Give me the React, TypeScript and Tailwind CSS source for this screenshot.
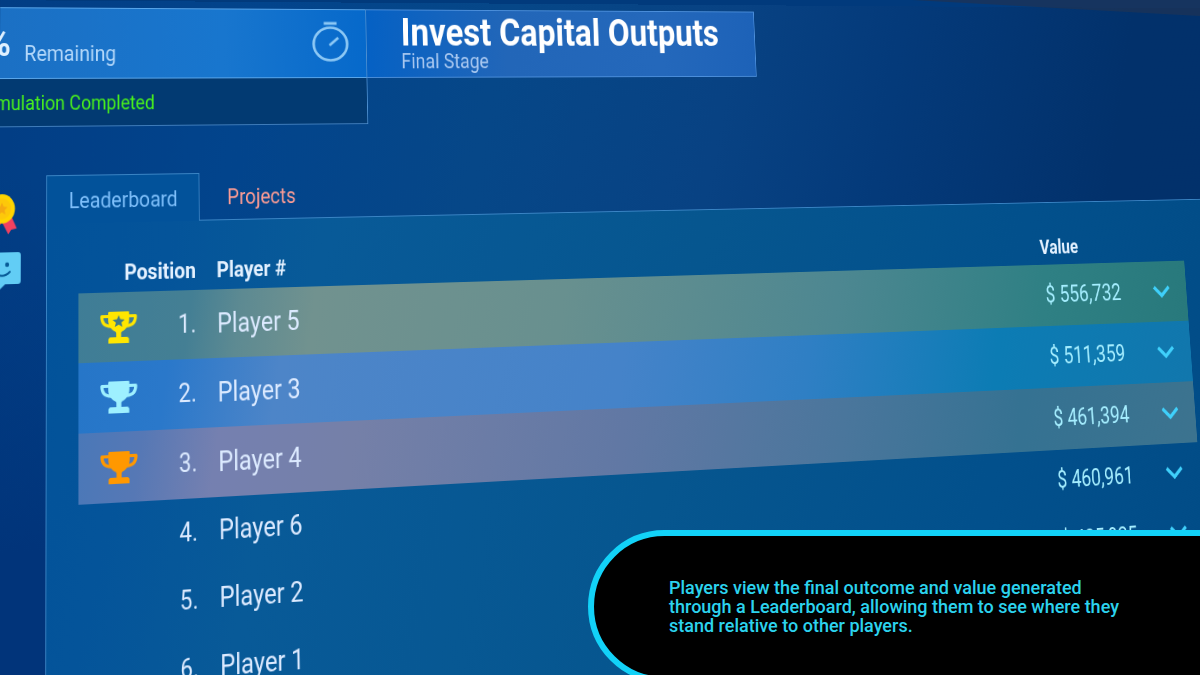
import React from "react";

type Row = {
  place: number;
  player: string;
  value: string;
  cup?: string;
  band?: string;
  star?: boolean;
};

const rows: Row[] = [
  {
    place: 1,
    player: "Player 5",
    value: "$ 556,732",
    cup: "#ffe600",
    star: true,
    band: "h-[68px] bg-[linear-gradient(100deg,#3f7d96_0%,#447f94_9%,#5d8a92_13%,#71928f_19%,#68908f_40%,#4d8791_65%,#2f8084_85%,#28797c_100%)]",
  },
  {
    place: 2,
    player: "Player 3",
    value: "$ 511,359",
    cup: "#9ef0ff",
    band: "h-[68px] bg-[linear-gradient(100deg,#2676c8_0%,#2a78ca_7%,#4d85c8_16%,#4583c9_45%,#2f7fc4_62%,#0c7cb4_80%,#1177ad_100%)]",
  },
  {
    place: 3,
    player: "Player 4",
    value: "$ 461,394",
    cup: "#ff9800",
    band: "h-[68px] bg-[linear-gradient(100deg,#4a78b8_0%,#5678b5_5%,#7580b0_11%,#7580a8_22%,#6178a4_45%,#4a769c_65%,#357292_82%,#3c738f_100%)]",
  },
  { place: 4, player: "Player 6", value: "$ 460,961" },
  { place: 5, player: "Player 2", value: "$ 425,925" },
  { place: 6, player: "Player 1", value: "" },
];

function Trophy({ color, star }: { color: string; star?: boolean }) {
  return (
    <svg viewBox="0 0 38 31" className="h-[31px] w-[42px]" aria-hidden="true" preserveAspectRatio="none">
      <path
        fill={color}
        d="M10 0h18.500c.8 0 1.200.5 1.200 1.200V8c0 6-3.200 9.500-7.200 11.500-.8.500-1 1-1 2V25h5.500c1.500 0 2.500 1 2.500 2.500V31H8.500v-3.500C8.500 26 9.500 25 11 25h5.500v-3.500c0-1-.2-1.500-1-2C11.500 17.500 8.300 14 8.300 8V1.200C8.300.5 8.900 0 10 0Z"
      />
      <path
        fill="none"
        stroke={color}
        strokeWidth="3"
        strokeLinejoin="round"
        d="M9 4.500H1.800c0 6 3 9.500 9.200 9.700M29 4.500h7.200c0 6-3 9.500-9.200 9.700"
      />
      {star && (
        <path fill="#3f7a86" d="m19 3.500 1.700 4.100 4.500.3-3.400 2.900 1.100 4.300-3.900-2.300-3.900 2.300 1.100-4.300-3.400-2.900 4.500-.3Z" />
      )}
    </svg>
  );
}

function Stopwatch() {
  return (
    <svg
      viewBox="0 0 42 42"
      className="h-[42px] w-[50px]"
      fill="none"
      stroke="#8cc8f5"
      strokeWidth="2.600"
      preserveAspectRatio="none"
      aria-hidden="true"
    >
      <path d="M14.500 2h13" strokeWidth="3" />
      <circle cx="21" cy="23.500" r="17" />
      <path d="m20 25 9-8" />
    </svg>
  );
}

function Chevron() {
  return (
    <svg viewBox="0 0 26 15" className="h-[15px] w-[28px]" fill="none" stroke="currentColor" strokeWidth="4" aria-hidden="true">
      <path d="m2 2 11 9.500L24 2" />
    </svg>
  );
}

function Medal() {
  return (
    <svg viewBox="0 0 34 40" className="h-[41px] w-[40px]" aria-hidden="true">
      <path fill="#f2415f" d="m8 24-7 11 6 .5 3 4.500 7-13Zm18-4 7 14-6 1-3 4.500-7-12Z" />
      <circle cx="17" cy="15" r="14" fill="#ffd500" />
      <circle cx="17" cy="15" r="10" fill="#fdc80a" />
      <path fill="#f5a912" d="m17 9 1.800 3.900 4.200.5-3.100 2.900.8 4.200-3.700-2.100-3.700 2.100.8-4.200-3.100-2.900 4.200-.5Z" />
    </svg>
  );
}

function Chat() {
  return (
    <svg viewBox="0 0 42 38" className="h-[38px] w-[44px]" aria-hidden="true">
      <path fill="#62cdf5" d="M5 1h33c2 0 3 1 3 3v25c0 2-1 3-3 3H24l-6 5v-5H5c-2 0-3-1-3-3V4c0-2 1-3 3-3Z" />
      <circle cx="14" cy="12" r="2.200" fill="#075b97" />
      <circle cx="26" cy="13" r="2.200" fill="#075b97" />
      <path d="M12 20c5 5 12 5 17 0" fill="none" stroke="#075b97" strokeWidth="2" strokeLinecap="round" />
    </svg>
  );
}

function Banner() {
  return (
    <header className="flex items-start">
      <section className="w-[427px] border-r border-[#4d8fd0]">
        <div className="flex h-[72px] items-center border-y border-[#5aa6ea] bg-[linear-gradient(90deg,#1b70c4,#1876ce_60%,#0669cb)] pr-[18px]">
          <span className="-ml-[16px] text-[38px] font-bold text-[#dff0ff]">%</span>
          <span className="ml-[15px] pt-5 text-[22px] text-[#b4d8fa]">Remaining</span>
          <span className="ml-auto pb-1">
            <Stopwatch />
          </span>
        </div>
        <div className="flex h-[48px] items-center border-b border-[#3f7cba] bg-[#023a72]">
          <p className="-ml-[22px] text-[20px] whitespace-nowrap text-[#48f01c]">Simulation Completed</p>
        </div>
      </section>
      <section className="flex h-[72px] w-[499px] flex-col justify-center border border-l-0 border-[#4c8fdb] bg-[linear-gradient(90deg,#0561c4,#2266b8_35%,#2468bb_75%,#1d62b8)] pb-[3px] pl-[42px]">
        <h1 className="text-[41px] leading-[40px] font-bold whitespace-nowrap text-white">Invest Capital Outputs</h1>
        <p className="text-[22px] leading-[22px] text-[#a9c8f0]">Final Stage</p>
      </section>
    </header>
  );
}

function Leaderboard() {
  return (
    <div className="grow">
      <nav className="flex h-[48px] items-stretch">
        <button className="w-[174px] border border-b-0 border-[#3a84c4] bg-[#02529a] pt-[2px] text-[22px] text-[#7fc0fb]">
          Leaderboard
        </button>
        <button className="grow border-b border-[#3a84c4] pt-[2px] pl-[32px] text-left text-[22px] text-[#ff9d94]">
          Projects
        </button>
      </nav>
      <div className="min-h-[560px] border-l border-[#3a84c4] bg-[linear-gradient(105deg,#02529a_0%,#04549a_8%,#085a98_18%,#06568f_45%,#02508c_70%,#014a84_100%)] pt-[30px] pr-[162px] pl-[35px]">
        <table className="w-full table-fixed border-collapse">
          <colgroup>
            <col className="w-[88px]" />
            <col className="w-[45px]" />
            <col />
            <col className="w-[220px]" />
            <col className="w-[97px]" />
          </colgroup>
          <thead>
            <tr className="h-[39px] align-middle text-[22px] leading-[24px] text-[#e4f1ff]">
              <th colSpan={2} className="p-0 text-right font-bold">
                Position
              </th>
              <th className="py-0 pr-0 pl-6 text-left font-bold">Player #</th>
              <th className="py-0 pr-[58px] pl-0 text-right font-bold">Value</th>
              <th className="p-0" aria-label="Details" />
            </tr>
          </thead>
          <tbody>
            {rows.map((r) => (
              <tr key={r.place} className={r.band ?? "h-[65px]"}>
                <td className="p-0 pl-6">{r.cup && <Trophy color={r.cup} star={r.star} />}</td>
                <td className="p-0 text-right text-[25px] text-[#dceaff]">{r.place}.</td>
                <td className="py-0 pr-0 pl-6 text-[27px] text-[#dceaff]">{r.player}</td>
                <td className="p-0 text-right text-[25px] text-[#a5eeff]">{r.value}</td>
                <td className="p-0">
                  {r.value && (
                    <button aria-label={`Expand ${r.player}`} className="ml-[46px] block text-[#3fd0fb]">
                      <Chevron />
                    </button>
                  )}
                </td>
              </tr>
            ))}
          </tbody>
        </table>
      </div>
    </div>
  );
}

export default function App() {
  return (
    <main className="relative h-screen overflow-hidden bg-[#013a7c] font-['Roboto','Liberation_Sans',sans-serif]">
      {/* The display is tilted away to the right; one perspective matrix carries the whole screen. */}
      <div className="w-[140%] origin-top-left bg-[linear-gradient(105deg,#023d84_0%,#02448c_16%,#064788_32%,#084283_48%,#043a7a_60%,#02316b_78%,#02306b_100%)] pt-[7px] [transform:matrix3d(0.9,0.006105,0,0.000111,-0.0052,0.99633,0,-0.0000667,0,0,1,0,0.286,0.2018,0,1.00367)]">
        <Banner />
        <div className="mt-[48px] flex items-start">
          <aside className="flex w-[52px] shrink-0 flex-col gap-4 self-stretch bg-[linear-gradient(180deg,transparent,#01347a_60%)] pt-[17px]">
            <button aria-label="Awards" className="-ml-[17px] block">
              <Medal />
            </button>
            <button aria-label="Chat" className="-ml-[18px] block">
              <Chat />
            </button>
          </aside>
          <Leaderboard />
        </div>
      </div>
      {/* Bezel shadow in the far corner */}
      <div className="absolute top-0 right-0 h-4 w-[24%] bg-[#1c3358] opacity-80 [clip-path:polygon(0_0,100%_0,100%_100%)]" />
      <aside className="absolute -right-2 -bottom-2 left-[49%] flex h-[153px] items-center rounded-l-full border-[6px] border-[#12d2f8] bg-black pl-[75px]">
        <p className="max-w-[460px] text-[18px] leading-[19px] font-medium text-[#2cd3ee]">
          Players view the final outcome and value generated through a Leaderboard, allowing them to see where they
          stand relative to other players.
        </p>
      </aside>
    </main>
  );
}
